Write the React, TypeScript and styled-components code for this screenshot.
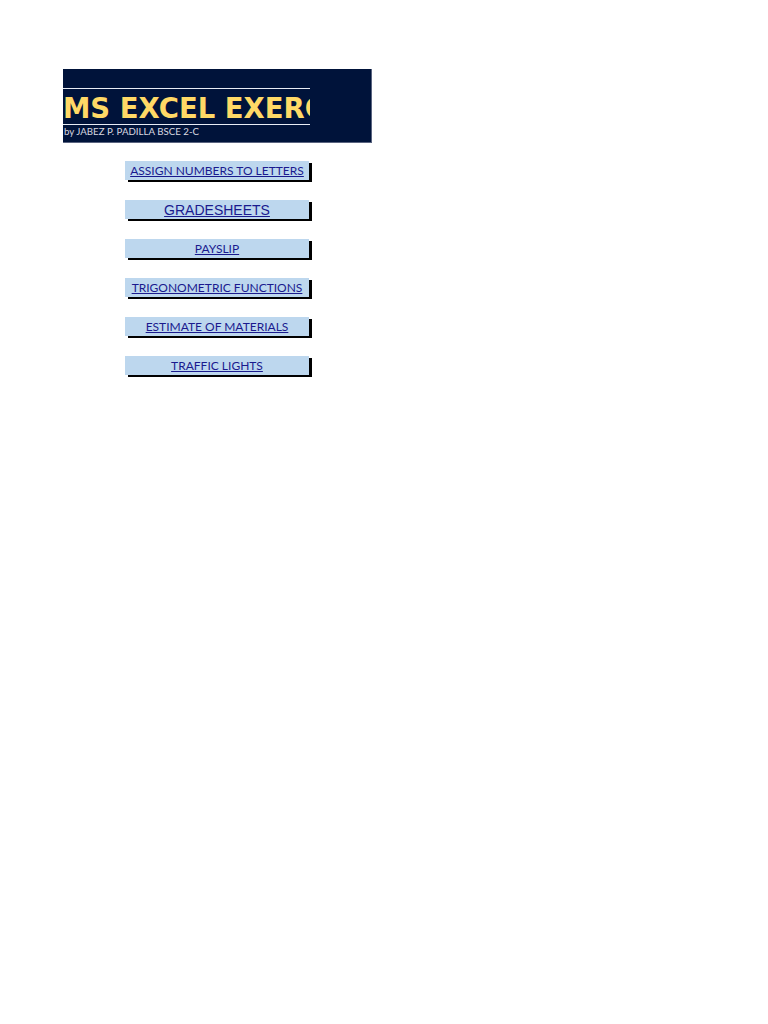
import React from "react";
import styled, { createGlobalStyle } from "styled-components";

const Global = createGlobalStyle`
  html, body { margin: 0; padding: 0; background: #ffffff; }
  body { font-family: "Lato", "Liberation Sans", sans-serif; }
`;

const Page = styled.div`
  width: 768px;
  height: 1024px;
  padding-top: 69px;
  box-sizing: border-box;
`;

const Banner = styled.div`
  margin-left: 63px;
  width: 309px;
  height: 74px;
  background: #00133a;
  box-sizing: border-box;
  border-right: 1px solid #5a6480;
  border-bottom: 1px solid #5a6480;
  padding-top: 19px;
`;

const TitleCell = styled.div`
  width: 247px;
  overflow: hidden;
  border-top: 1px solid #e8ecf5;
  border-bottom: 1px solid #e8ecf5;
  height: 37px;
  box-sizing: border-box;
  display: flex;
  align-items: center;
`;

const Title = styled.div`
  font-family: "DejaVu Sans", "Verdana", sans-serif;
  font-weight: bold;
  font-size: 27.5px;
  color: #ffd966;
  white-space: nowrap;
  line-height: 1;
  margin-top: 4px;
`;

const Sub = styled.div`
  font-family: "Lato", "Liberation Sans", sans-serif;
  font-size: 9.7px;
  color: #d9d9e0;
  padding-left: 1px;
  white-space: nowrap;
  line-height: 12px;
`;

const Links = styled.div`
  margin-left: 125px;
  margin-top: 18px;
  display: flex;
  flex-direction: column;
  gap: 20px;
`;

const LinkButton = styled.a<{ $arial?: boolean }>`
  display: flex;
  align-items: center;
  justify-content: center;
  width: 184px;
  height: 19px;
  background: #bdd7ee;
  box-shadow: 3px 2px 0 #000000;
  color: #1a1a8e;
  text-decoration: underline;
  font-family: ${(p) => (p.$arial ? '"Liberation Sans", Arial, sans-serif' : '"Lato", "Liberation Sans", sans-serif')};
  font-size: ${(p) => (p.$arial ? "14px" : "12px")};
  white-space: nowrap;
  cursor: pointer;
`;

const items: { label: string; arial?: boolean }[] = [
  { label: "ASSIGN NUMBERS TO LETTERS" },
  { label: "GRADESHEETS", arial: true },
  { label: "PAYSLIP" },
  { label: "TRIGONOMETRIC FUNCTIONS" },
  { label: "ESTIMATE OF MATERIALS" },
  { label: "TRAFFIC LIGHTS" },
];

export default function App() {
  return (
    <>
      <Global />
      <Page>
        <Banner>
          <TitleCell>
            <Title>MS EXCEL EXERCISES</Title>
          </TitleCell>
          <Sub>by JABEZ P. PADILLA BSCE 2-C</Sub>
        </Banner>
        <Links>
          {items.map((it) => (
            <LinkButton key={it.label} $arial={it.arial}>
              {it.label}
            </LinkButton>
          ))}
        </Links>
      </Page>
    </>
  );
}
